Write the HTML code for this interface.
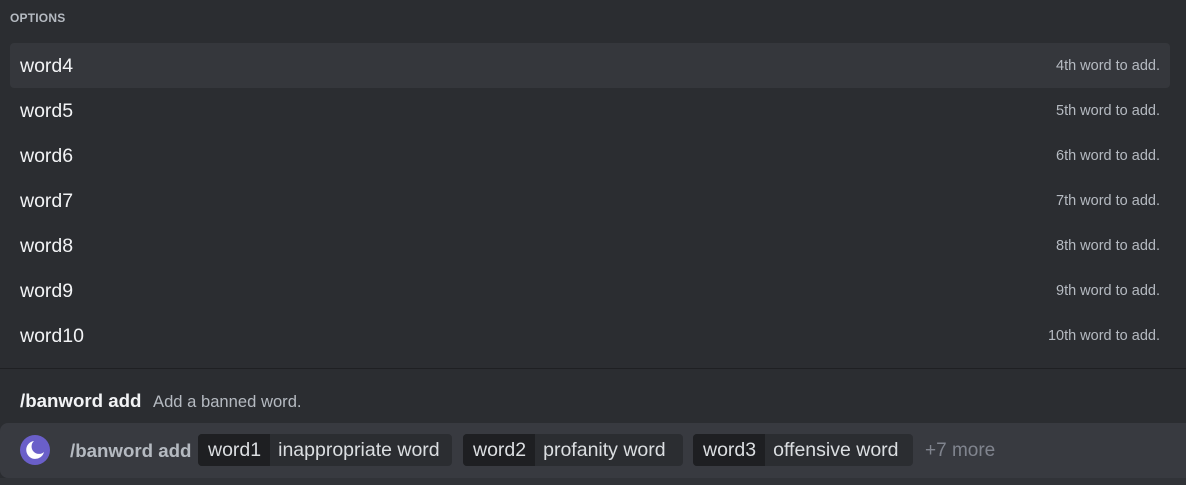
<!DOCTYPE html>
<html><head><style>
body{margin:0;width:1186px;height:485px;background:#2b2d31;font-family:"Liberation Sans",sans-serif;position:relative;overflow:hidden;color:#dbdee1}
.h{position:absolute;left:10px;top:11px;font-size:12px;font-weight:bold;color:#b5bac1;letter-spacing:.2px}
.row{position:absolute;left:10px;width:1160px;height:45px;border-radius:4px}
.row .n{position:absolute;left:10px;top:12px;font-size:19.5px;color:#f2f3f5}
.row .d{position:absolute;right:10px;top:15px;font-size:14.5px;color:#b5bac1}
.sep{position:absolute;left:0;top:368px;width:1186px;height:1px;background:#1f2023}
.cmd{position:absolute;left:0;top:369px;width:1186px;height:54px;background:#2b2d31}
.bar{position:absolute;left:0;top:423px;width:1186px;height:55px;background:#383a40;border-radius:8px 0 0 8px}
.bot{position:absolute;left:0;top:478px;width:1186px;height:7px;background:#313338}
.chip{position:absolute;top:434px;height:32px;background:#2b2d31;border-radius:4px;font-size:19.5px;line-height:33px;color:#dbdee1;overflow:hidden;white-space:nowrap}
.chip b{font-weight:normal;display:inline-block;background:#1e1f22;padding:0 9px 0 10px;color:#dbdee1}
.chip span{padding:0 8px}
</style></head><body>
<div class="h">OPTIONS</div>
<div class="row" style="top:43px;background:#35373c"><div class="n">word4</div><div class="d">4th word to add.</div></div>
<div class="row" style="top:88px"><div class="n">word5</div><div class="d">5th word to add.</div></div>
<div class="row" style="top:133px"><div class="n">word6</div><div class="d">6th word to add.</div></div>
<div class="row" style="top:178px"><div class="n">word7</div><div class="d">7th word to add.</div></div>
<div class="row" style="top:223px"><div class="n">word8</div><div class="d">8th word to add.</div></div>
<div class="row" style="top:268px"><div class="n">word9</div><div class="d">9th word to add.</div></div>
<div class="row" style="top:313px"><div class="n">word10</div><div class="d">10th word to add.</div></div>
<div class="sep"></div>
<div class="cmd"><span style="position:absolute;left:20px;top:21px;font-size:18.7px;font-weight:bold;color:#f2f3f5">/banword add</span><span style="position:absolute;left:153px;top:23px;font-size:16.6px;color:#b5bac1">Add a banned word.</span></div>
<div class="bar"></div>
<div class="bot"></div>
<svg style="position:absolute;left:20px;top:435px" width="30" height="30" viewBox="0 0 30 30"><circle cx="15" cy="15" r="15" fill="#6a5fc9"/><path d="M14 6 A9 9 0 1 0 24 17 A7 7 0 0 1 14 6Z" fill="#fff"/></svg>
<span style="position:absolute;left:70px;top:440px;font-size:18.7px;font-weight:bold;color:#b5bac1">/banword add</span>
<div class="chip" style="left:198px;width:254px"><b>word1</b><span>inappropriate word</span></div>
<div class="chip" style="left:463px;width:220px"><b>word2</b><span>profanity word</span></div>
<div class="chip" style="left:693px;width:220px"><b>word3</b><span>offensive word</span></div>
<span style="position:absolute;left:925px;top:440px;font-size:19px;color:#80848e">+7 more</span>
</body></html>
